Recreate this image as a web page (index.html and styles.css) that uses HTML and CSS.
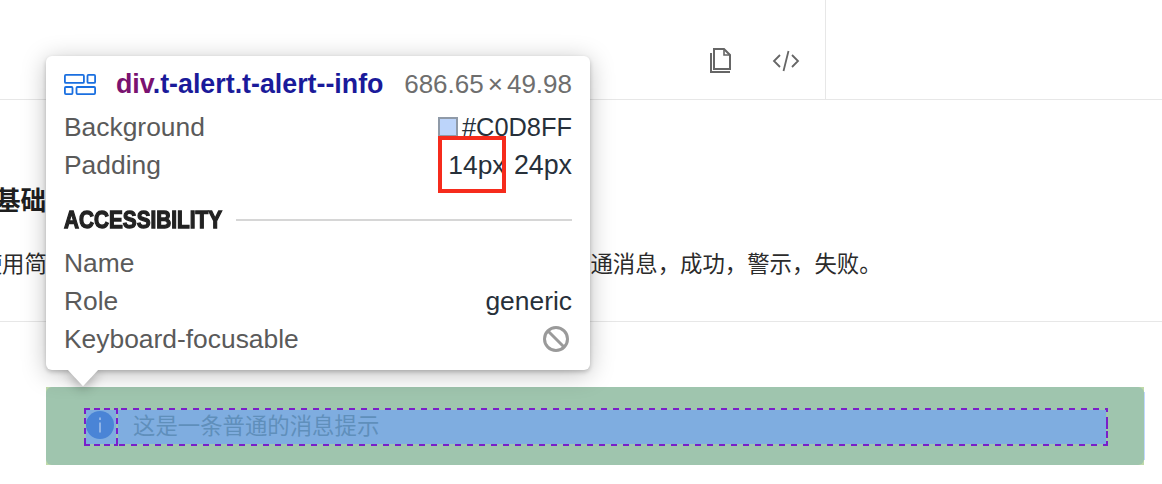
FILE: index.html
```html
<!DOCTYPE html>
<html lang="zh">
<head>
<meta charset="utf-8">
<title>Alert</title>
<link rel="stylesheet" href="styles.css">
</head>
<body>
<header class="topbar">
  <div class="topbar-main">
    <svg class="icon-doc" width="24" height="27" viewBox="0 0 24 27" fill="none" stroke="#666" stroke-width="2">
      <path d="M5 2h10l6 6v14H5z"/>
      <path d="M15 2v6h6" stroke-width="1.6"/>
      <path d="M2 6v19h19" stroke-width="2"/>
    </svg>
    <svg class="icon-code" width="28" height="24" viewBox="0 0 28 24" fill="none" stroke="#666" stroke-width="1.8">
      <path d="M8 6l-6 6 6 6"/>
      <path d="M20 6l6 6-6 6"/>
      <path d="M16.500 2l-5 20"/>
    </svg>
  </div>
  <div class="topbar-side"></div>
</header>

<main class="content">
  <h2 class="title">基础提示</h2>
  <p class="desc">使用简明的文案、图标与颜色传达四类不同状态提示信息： 普通消息，成功，警示，失败。</p>
  <div class="rule"></div>
  <section class="demo">
    <div class="alert">
      <div class="alert-fill">
        <div class="alert-icon-box">
          <svg width="28" height="28" viewBox="0 0 28 28">
            <circle cx="14" cy="14" r="14" fill="#4a84d6"/>
            <rect x="13" y="11.500" width="2" height="10" fill="#8fb3e6"/>
            <rect x="13" y="6.500" width="2" height="2.500" fill="#8fb3e6"/>
          </svg>
        </div>
        <div class="alert-message">这是一条普通的消息提示</div>
      </div>
    </div>
  </section>
</main>

<div class="inspect-arrow-shadow"></div>
<aside class="inspect">
  <div class="inspect-head">
    <svg class="inspect-glyph" width="32" height="21" viewBox="0 0 32 21" fill="none" stroke="#1a6fe0" stroke-width="1.800">
      <rect x="0.900" y="0.900" width="19" height="8" rx="1"/>
      <rect x="23.500" y="0.900" width="7.600" height="8" rx="1"/>
      <rect x="0.900" y="13" width="7.600" height="7.100" rx="1"/>
      <rect x="12.500" y="13" width="18.600" height="7.100" rx="1"/>
    </svg>
    <span class="selector"><span class="tag">div</span>.t-alert.t-alert--info</span>
    <span class="size">686.65<span class="times">×</span>49.98</span>
  </div>
  <div class="row"><span class="label">Background</span><span class="value hex"><i class="swatch"></i>#C0D8FF</span></div>
  <div class="row"><span class="label">Padding</span><span class="value">14px <span class="gap">24px</span></span></div>
  <div class="section-head"><span class="section-name">ACCESSIBILITY</span><span class="section-line"></span></div>
  <div class="row"><span class="label">Name</span></div>
  <div class="row"><span class="label">Role</span><span class="value">generic</span></div>
  <div class="row"><span class="label">Keyboard-focusable</span>
    <svg class="no-icon" width="28" height="28" viewBox="0 0 28 28" fill="none" stroke="#9a9a9a" stroke-width="3">
      <circle cx="14" cy="14" r="11.500"/>
      <path d="M6 6l16 16"/>
    </svg>
  </div>
</aside>
<div class="inspect-arrow"></div>
<div class="red-mark"></div>
</body>
</html>
```

FILE: styles.css
```css
* { box-sizing: border-box; }
html, body {
  margin: 0;
  height: 484px;
  overflow: hidden;
  background: #fff;
  font-family: "Liberation Sans", "Noto Sans CJK SC", sans-serif;
}
.topbar {
  display: flex;
  height: 100px;
  border-bottom: 1px solid #e7e7e7;
}
.topbar-main {
  width: 826px;
  border-right: 1px solid #e7e7e7;
  display: flex;
  justify-content: flex-end;
  align-items: flex-start;
  padding: 47px 25px 0 0;
}
.icon-doc { margin-right: 39px; }
.icon-code { margin-top: 2px; }
.topbar-side { flex: 1; }

.content { padding-left: 46px; }
.title {
  margin: 83px 0 0 -51px;
  font-size: 25.600px;
  line-height: 36px;
  font-weight: 700;
  color: #1f1f1f;
}
.desc {
  margin: 28px 0 0 -66.300px;
  font-size: 22.400px;
  line-height: 36px;
  color: #2b2b2b;
  white-space: nowrap;
}
.rule {
  margin: 38px 0 0 -46px;
  height: 1px;
  background: #e7e7e7;
}
.demo { padding-top: 65px; }
.alert {
  position: relative;
  width: 1098px;
  height: 78px;
  background: #bfdaa9;
}
.alert::after {
  content: "";
  position: absolute;
  right: -1px;
  top: 5px;
  bottom: 5px;
  width: 1px;
  background: #c0d8ff;
}
.alert-fill {
  display: flex;
  height: 100%;
  padding: 21px 36px 19px 38px;
  background: #9fc5ae;
  border-radius: 6px;
}
.alert-icon-box {
  width: 34px;
  height: 38px;
  padding: 3px 0 0 2px;
  line-height: 0;
  background:
    repeating-linear-gradient(90deg, #7a1fc9 0 6px, transparent 6px 10px) top / 100% 2px no-repeat,
    repeating-linear-gradient(90deg, #7a1fc9 0 6px, transparent 6px 10px) bottom / 100% 2px no-repeat,
    repeating-linear-gradient(180deg, #7a1fc9 0 6px, transparent 6px 10px) left / 2px 100% no-repeat,
    repeating-linear-gradient(180deg, #7a1fc9 0 6px, transparent 6px 10px) right / 2px 100% no-repeat,
    linear-gradient(#7fade0, #7fade0) center / calc(100% - 4px) calc(100% - 4px) no-repeat;
}
.alert-message {
  flex: 1;
  height: 38px;
  padding-left: 15px;
  font-size: 22.400px;
  line-height: 38px;
  color: #5f8fbb;
  background:
    repeating-linear-gradient(90deg, transparent 0 3px, #7a1fc9 3px 9px, transparent 9px 12px) top / 100% 2px no-repeat,
    repeating-linear-gradient(90deg, transparent 0 1px, #7a1fc9 1px 7px, transparent 7px 12px) bottom / 100% 2px no-repeat,
    repeating-linear-gradient(180deg, #7a1fc9 0 4px, transparent 4px 9px, #7a1fc9 9px 21px, transparent 21px 23px, #7a1fc9 23px 30px, transparent 30px 33px, #7a1fc9 33px 38px) right / 2px 100% no-repeat,
    linear-gradient(#7fade0, #7fade0) left center / calc(100% - 2px) calc(100% - 4px) no-repeat;
}

.inspect {
  position: absolute;
  left: 46px;
  top: 56px;
  width: 544px;
  height: 314px;
  padding: 9px 18px 0;
  background: #fff;
  border-radius: 6px;
  box-shadow: 0 2px 4px rgba(0, 0, 0, .2), 0 4px 24px rgba(0, 0, 0, .25);
  font-size: 26.400px;
}
.inspect-arrow,
.inspect-arrow-shadow {
  position: absolute;
  left: 67px;
  top: 369px;
  width: 0;
  height: 0;
  border-style: solid;
  border-width: 17px 16px 0;
  border-color: #fff transparent transparent;
}
.inspect-arrow-shadow { filter: drop-shadow(0 3px 6px rgba(0, 0, 0, .35)); }
.inspect-head {
  display: flex;
  align-items: center;
  height: 38px;
  margin-bottom: 5px;
}
.inspect-glyph { margin-right: 20px; }
.selector { font-size: 26.800px; font-weight: 700; color: #1a1a9a; white-space: nowrap; }
.tag { color: #7a1270; }
.size { margin-left: auto; font-size: 26px; color: #6e6e6e; white-space: nowrap; }
.times { margin: 0 4px; }
.row {
  display: flex;
  justify-content: space-between;
  align-items: center;
  height: 38px;
}
.label { color: #5a5a5a; }
.value { display: flex; align-items: center; color: #27303a; white-space: pre; }
.hex { font-size: 25.400px; }
.gap { margin-left: 1px; font-size: 26.800px; }
.swatch {
  width: 20px;
  height: 20px;
  margin-right: 4px;
  background: #bcd4fa;
  border: 2px solid #8f9aa8;
}
.section-head {
  display: flex;
  align-items: center;
  height: 30px;
  margin: 21px 0 9px;
}
.section-name {
  display: block;
  width: 157px;
  font-size: 24px;
  font-weight: 700;
  white-space: nowrap;
  color: #222;
  -webkit-text-stroke: 1.300px #222;
  transform: scaleX(.865);
  transform-origin: left center;
}
.section-line {
  flex: 1;
  height: 2px;
  margin-left: 15px;
  background: #d6d6d6;
}
.no-icon { margin-right: 2px; }
.red-mark {
  position: absolute;
  left: 438px;
  top: 136px;
  width: 68px;
  height: 57px;
  border: 4px solid #f62b1c;
}
```
